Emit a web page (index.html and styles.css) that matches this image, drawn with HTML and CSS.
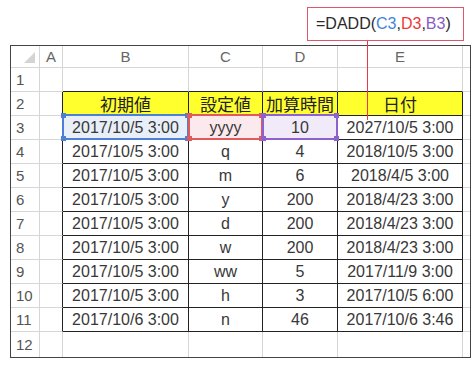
FILE: index.html
```html
<!DOCTYPE html>
<html>
<head>
<meta charset="utf-8">
<link rel="stylesheet" href="styles.css">
</head>
<body>
<div class="page">
  <div class="callout">=DADD(<span class="cb">C3</span>,<span class="cr">D3</span>,<span class="cp">B3</span>)</div>
  <div class="leader"></div>
  <div class="sheet">
    <div class="c corner"><span class="tri"></span></div>
    <div class="c hd">A</div>
    <div class="c hd">B</div>
    <div class="c hd">C</div>
    <div class="c hd">D</div>
    <div class="c hd">E</div>
    <div class="c hd"></div>

    <div class="c rn">1</div>
    <div class="c"></div>
    <div class="c tb"></div>
    <div class="c tb"></div>
    <div class="c tb"></div>
    <div class="c tb"></div>
    <div class="c"></div>

    <div class="c rn">2</div>
    <div class="c tr"></div>
    <div class="c d y jp">初期値</div>
    <div class="c d y jp">設定値</div>
    <div class="c d y jp">加算時間</div>
    <div class="c d y jp">日付</div>
    <div class="c"></div>

    <div class="c rn">3</div>
    <div class="c tr"></div>
    <div class="c d bgb">2017/10/5 3:00<i class="sel sb"><b class="k tl"></b><b class="k bl"></b><b class="k tr2"></b><b class="k br"></b></i></div>
    <div class="c d bgr">yyyy<i class="sel sr"><b class="k tl"></b><b class="k bl"></b><b class="k tr2"></b><b class="k br"></b></i></div>
    <div class="c d bgp">10<i class="sel sp"><b class="k tl"></b><b class="k bl"></b><b class="k tr2"></b><b class="k br"></b></i></div>
    <div class="c d">2027/10/5 3:00</div>
    <div class="c"></div>

    <div class="c rn">4</div>
    <div class="c tr"></div>
    <div class="c d">2017/10/5 3:00</div>
    <div class="c d">q</div>
    <div class="c d">4</div>
    <div class="c d">2018/10/5 3:00</div>
    <div class="c"></div>

    <div class="c rn">5</div>
    <div class="c tr"></div>
    <div class="c d">2017/10/5 3:00</div>
    <div class="c d">m</div>
    <div class="c d">6</div>
    <div class="c d">2018/4/5 3:00</div>
    <div class="c"></div>

    <div class="c rn">6</div>
    <div class="c tr"></div>
    <div class="c d">2017/10/5 3:00</div>
    <div class="c d">y</div>
    <div class="c d">200</div>
    <div class="c d">2018/4/23 3:00</div>
    <div class="c"></div>

    <div class="c rn">7</div>
    <div class="c tr"></div>
    <div class="c d">2017/10/5 3:00</div>
    <div class="c d">d</div>
    <div class="c d">200</div>
    <div class="c d">2018/4/23 3:00</div>
    <div class="c"></div>

    <div class="c rn">8</div>
    <div class="c tr"></div>
    <div class="c d">2017/10/5 3:00</div>
    <div class="c d">w</div>
    <div class="c d">200</div>
    <div class="c d">2018/4/23 3:00</div>
    <div class="c"></div>

    <div class="c rn">9</div>
    <div class="c tr"></div>
    <div class="c d">2017/10/5 3:00</div>
    <div class="c d">ww</div>
    <div class="c d">5</div>
    <div class="c d">2017/11/9 3:00</div>
    <div class="c"></div>

    <div class="c rn">10</div>
    <div class="c tr"></div>
    <div class="c d">2017/10/5 3:00</div>
    <div class="c d">h</div>
    <div class="c d">3</div>
    <div class="c d">2017/10/5 6:00</div>
    <div class="c"></div>

    <div class="c rn">11</div>
    <div class="c tr"></div>
    <div class="c d">2017/10/6 3:00</div>
    <div class="c d">n</div>
    <div class="c d">46</div>
    <div class="c d">2017/10/6 3:46</div>
    <div class="c"></div>

    <div class="c rn">12</div>
    <div class="c"></div>
    <div class="c"></div>
    <div class="c"></div>
    <div class="c"></div>
    <div class="c"></div>
    <div class="c"></div>
  </div>
</div>
</body>
</html>
```
FILE: styles.css
```css
html, body {
  margin: 0;
  padding: 0;
  background: #ffffff;
}
.page {
  position: relative;
  width: 474px;
  height: 365px;
  padding-top: 7px;
  box-sizing: border-box;
  font-family: "Liberation Sans", "Noto Sans CJK JP", sans-serif;
  color: #383838;
}
.callout {
  margin-left: 307px;
  width: 157px;
  height: 34px;
  box-sizing: border-box;
  border: 1px solid #e0566a;
  display: flex;
  align-items: center;
  padding-left: 8px;
  font-size: 16px;
  color: #2a2a2a;
}
.cb { color: #3f86d8; }
.cr { color: #ea3a3a; }
.cp { color: #8a5cc4; }
.leader {
  position: absolute;
  left: 367px;
  top: 41px;
  width: 1px;
  height: 79px;
  background: #e8384a;
  z-index: 5;
}
.sheet {
  margin-top: 4px;
  margin-left: 10px;
  width: 461px;
  box-sizing: border-box;
  border: 1px solid #444;
  display: grid;
  grid-template-columns: 29px 23px 126px 74px 75px 125px 7px;
  grid-template-rows: 22px repeat(11, 24px) 25px;
}
.c {
  box-sizing: border-box;
  border-right: 1px solid #d6d6d6;
  border-bottom: 1px solid #d6d6d6;
  display: flex;
  align-items: center;
  justify-content: center;
  font-size: 16px;
  position: relative;
  white-space: nowrap;
}
.c:nth-child(7n) { border-right: none; }
.sheet > .c:nth-last-child(-n+7) { border-bottom: none; }
.hd {
  color: #666;
  font-size: 15px;
}
.corner {
  justify-content: flex-end;
  align-items: flex-end;
  padding: 0 4px 4px 0;
}
.tri {
  width: 0;
  height: 0;
  border-left: 11px solid transparent;
  border-bottom: 11px solid #d4d4d4;
}
.rn {
  justify-content: flex-start;
  padding-left: 5px;
  color: #555;
  font-size: 15px;
}
.tb { border-bottom-color: #222; }
.tr { border-right-color: #222; }
.d {
  border-right-color: #222;
  border-bottom-color: #222;
}
.y { background: #ffff2e; }
.jp {
  font-family: "Noto Sans CJK JP", sans-serif;
  font-size: 17px;
  color: #222;
}
.bgb { background: #e9eff9; }
.bgr { background: #fbe9ed; }
.bgp { background: #f1ebf9; }
.sel {
  position: absolute;
  top: -2px;
  left: -1px;
  right: -1px;
  bottom: -1px;
  border: 2px solid;
  box-sizing: border-box;
}
.sb { border-color: #4d7fd6; z-index: 1; }
.sr { border-color: #e05a5a; z-index: 2; }
.sp { border-color: #8d62cf; z-index: 3; }
.k {
  position: absolute;
  width: 5px;
  height: 5px;
}
.sb .k { background: #4d7fd6; }
.sr .k { background: #e05a5a; }
.sp .k { background: #8d62cf; }
.k.tl { left: -3px; top: -3px; }
.k.bl { left: -3px; bottom: -3px; }
.k.tr2 { right: -3px; top: -3px; }
.k.br { right: -3px; bottom: -3px; }
```
